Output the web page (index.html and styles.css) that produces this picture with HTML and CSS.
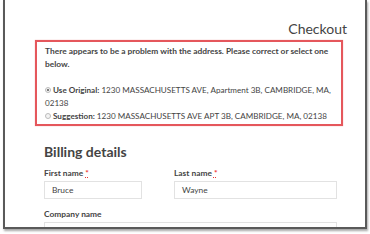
FILE: index.html
```html
<!DOCTYPE html>
<html>
<head>
<meta charset="utf-8">
<link rel="stylesheet" href="styles.css">
</head>
<body>
<div class="frame">
  <div class="header"><h1 class="title">Checkout</h1></div>
  <div class="notice">
    <p class="notice-msg">There appears to be a problem with the address. Please correct or select one below.</p>
    <div class="option"><span class="radio checked"></span><b>Use Original:</b> 1230 MASSACHUSETTS AVE, Apartment 3B, CAMBRIDGE, MA, 02138</div>
    <div class="option"><span class="radio"></span><b>Suggestion:</b> 1230 MASSACHUSETTS AVE APT 3B, CAMBRIDGE, MA, 02138</div>
  </div>
  <div class="billing">
    <h2 class="billing-title">Billing details</h2>
    <div class="row">
      <div class="field first">
        <label class="label">First name <abbr class="req">*</abbr></label>
        <div class="input">Bruce</div>
      </div>
      <div class="field last">
        <label class="label">Last name <abbr class="req">*</abbr></label>
        <div class="input">Wayne</div>
      </div>
    </div>
    <div class="field wide">
      <label class="label">Company name</label>
      <div class="input"></div>
    </div>
  </div>
</div>
</body>
</html>
```

FILE: styles.css
```css
html, body {
  margin: 0;
  padding: 0;
  background: #fff;
}
body {
  font-family: Lato, "Open Sans", sans-serif;
  color: #444;
  width: 370px;
  height: 234px;
  overflow: hidden;
}
.frame {
  margin: 0 3px 0 3px;
  height: 227px;
  border: 2px solid #5a5a5a;
  border-top: none;
  box-shadow: 1px 2px 2px rgba(0,0,0,0.35);
  overflow: hidden;
  background: #fff;
}
.header {
  padding: 20px 18px 0 0;
  text-align: right;
}
.title {
  margin: 0;
  font-size: 14px;
  font-weight: 400;
  line-height: 18px;
  color: #444;
}
.notice {
  margin: 2px 22px 0 30px;
  border: 2px solid #e5575c;
  padding: 3px 8px 1px 8px;
  font-size: 8.4px;
  line-height: 13px;
  color: #444;
  box-shadow: 0 0 1px rgba(229,87,92,0.5);
}
.notice-msg {
  margin: 0 0 13px 0;
  font-weight: 700;
}
.option {
  font-size: 8.1px;
}
.option b {
  font-weight: 700;
}
.radio {
  display: inline-block;
  width: 4px;
  height: 4px;
  border: 1px solid #bbb;
  border-radius: 50%;
  background: #f4f4f4;
  margin-right: 2px;
  vertical-align: 0;
  position: relative;
}
.radio.checked::after {
  content: "";
  position: absolute;
  left: 1px;
  top: 1px;
  width: 2px;
  height: 2px;
  border-radius: 50%;
  background: #555;
}
.billing {
  padding: 0 0 0 39px;
  width: 293px;
}
.billing-title {
  margin: 17px 0 0 0;
  font-size: 14px;
  font-weight: 700;
  line-height: 18px;
  color: #444;
}
.row {
  display: flex;
  gap: 32px;
  margin-top: 7px;
}
.field.first { width: 98px; }
.field.last { flex: 1; }
.field.wide { margin-top: 10px; }
.label {
  display: block;
  font-size: 8.4px;
  font-weight: 700;
  line-height: 11px;
  color: #444;
}
.req {
  color: #e33;
  text-decoration: underline dotted;
  border: none;
}
.input {
  margin-top: 2px;
  height: 16px;
  border: 1px solid #e2e2e2;
  font-size: 8.4px;
  line-height: 16px;
  padding: 0 7px;
  color: #444;
}
```
